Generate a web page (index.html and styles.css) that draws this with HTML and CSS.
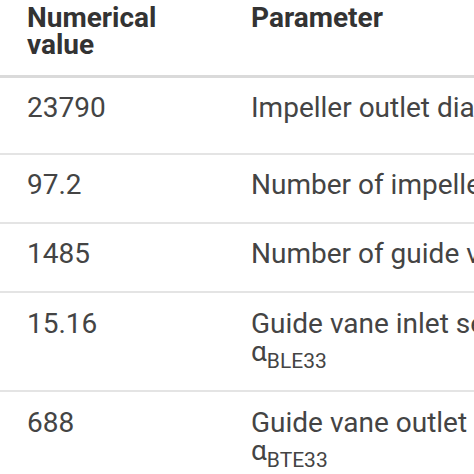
FILE: index.html
```html
<!DOCTYPE html>
<html>
<head>
<meta charset="utf-8">
<link rel="stylesheet" href="styles.css">
</head>
<body>
<table class="params">
  <thead>
    <tr>
      <th class="c-val">Numerical<br>value</th>
      <th class="c-par">Parameter</th>
    </tr>
  </thead>
  <tbody>
    <tr class="first">
      <td class="c-val">23790</td>
      <td class="c-par">Impeller outlet diameter</td>
    </tr>
    <tr>
      <td class="c-val">97.2</td>
      <td class="c-par">Number of impeller blades</td>
    </tr>
    <tr>
      <td class="c-val">1485</td>
      <td class="c-par">Number of guide vanes</td>
    </tr>
    <tr class="two-line">
      <td class="c-val">15.16</td>
      <td class="c-par">Guide vane inlet setting angle<br>α<sub>BLE33</sub></td>
    </tr>
    <tr class="two-line">
      <td class="c-val">688</td>
      <td class="c-par">Guide vane outlet setting angle<br>α<sub>BTE33</sub></td>
    </tr>
  </tbody>
</table>
</body>
</html>
```

FILE: styles.css
```css
html, body {
  margin: 0;
  padding: 0;
  background: #ffffff;
  overflow: hidden;
}

.params {
  border-collapse: collapse;
  width: 760px;
  font-family: Roboto, "Noto Sans", sans-serif;
  font-size: 28px;
  color: #444444;
}

.params th {
  text-align: left;
  font-weight: 700;
  color: #333333;
  line-height: 27px;
  padding: 4px 0 17px 0;
  border-bottom: 3px solid #dadada;
  vertical-align: top;
}

.params td {
  line-height: 28px;
  padding: 16px 0 23px 0;
  border-bottom: 2px solid #e4e4e4;
  vertical-align: top;
  white-space: nowrap;
}

.params tr.first td {
  padding-bottom: 31px;
}

.params tr.two-line td {
  padding-top: 17px;
  padding-bottom: 24px;
}

.params .c-val {
  padding-left: 27px;
  width: 224px;
}

.params .c-par {
  padding-left: 0;
}

.params sub {
  font-size: 21px;
  line-height: 0;
  vertical-align: -7px;
}
```
